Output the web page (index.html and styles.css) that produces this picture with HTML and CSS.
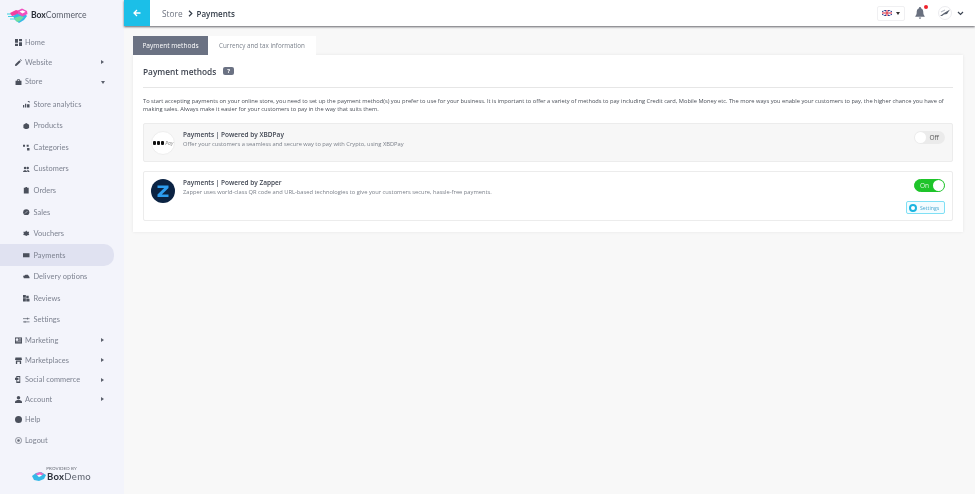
FILE: index.html
```html
<!DOCTYPE html>
<html lang="en">
<head>
<meta charset="utf-8">
<title>Payments</title>
<link rel="stylesheet" href="styles.css">
</head>
<body>
<div class="app">
  <aside class="sidebar">
    <div class="brand">
      <svg class="brand-logo" viewBox="0 0 22 15" width="22" height="15"><path d="M0 6h6M1 8.500h6M3 11h5" stroke="#3fd0e0" stroke-width="1"/><path d="M3 5l6-3 4 1-3 4-5 1z" fill="#f23fa0"/><path d="M6 8l6-3 6 1 2 2-3 4-5 3-4-3z" fill="#33b8e8"/><path d="M7 10l6-2 4 1-4 4-3 1z" fill="#6fe0a0"/><path d="M11 2.500l4-2 5 2.500.5 3-5 2.500-4.500-2.500z" fill="#f04fc0"/><path d="M12.500 3.500l3-1.300 3 1.500-3 1.800z" fill="#fff"/></svg>
      <span class="brand-name"><b>Box</b>Commerce</span>
    </div>
    <nav class="menu">
      <a class="item top"><svg class="ic" viewBox="0 0 8 8"><path d="M0 0h3.400v4.400H0zM4.600 0H8v2.600H4.600zM4.600 3.600H8V8H4.600zM0 5.400h3.400V8H0z"/></svg>Home</a>
      <a class="item top"><svg class="ic" viewBox="0 0 8 8"><path d="M0 8l.3-2L5 1.400 6.600 3 2 7.700zM5.600.8l.7-.6 1.500 1.500-.6.7z"/></svg>Website<i class="tri right"></i></a>
      <a class="item top"><svg class="ic" viewBox="0 0 8 8"><path d="M.6 3h6.800v5H.6zM2 3a2 2 0 0 1 4 0H5a1 1 0 0 0-2 0z"/></svg>Store<i class="tri down"></i></a>
      <div class="sub">
        <a class="item"><svg class="ic" viewBox="0 0 8 8"><path d="M0 5h1.500v3H0zM2.500 3.500H4V8H2.500zM5 4h3v4H5zM5.500 0H8v2.500z"/></svg>Store analytics</a>
        <a class="item"><svg class="ic" viewBox="0 0 8 8"><path d="M4 0l3.500 2v4L4 8 .5 6V2z"/></svg>Products</a>
        <a class="item"><svg class="ic" viewBox="0 0 8 8"><path d="M0 1h2.500v2.500H0zM4.500 1H7v2.500H4.500zM5 5h3v3H5z"/></svg>Categories</a>
        <a class="item"><svg class="ic" viewBox="0 0 8 8"><circle cx="2.500" cy="2.500" r="1.500"/><circle cx="5.800" cy="2.500" r="1.500"/><path d="M0 7.500C0 4.500 5 4.500 5 7.500zM5.500 7.500C5.500 6 5.300 5.200 5 5c2-.5 3 1 3 2.500z"/></svg>Customers</a>
        <a class="item"><svg class="ic" viewBox="0 0 8 8"><path d="M1 1h6v7H1zM3 0h2v1.500H3z"/></svg>Orders</a>
        <a class="item"><svg class="ic" viewBox="0 0 8 8"><circle cx="4" cy="4" r="3.800"/><path d="M2.500 5.500l3-3" stroke="#f3f4fb" stroke-width=".7"/></svg>Sales</a>
        <a class="item"><svg class="ic" viewBox="0 0 8 8"><path d="M4 .5l1.200 1.500 2.300.2-.5 2.300.8 1.500-2.300.5L4 7.500 2.500 6.500.2 6l.8-1.500L.5 2.200 2.800 2z"/></svg>Vouchers</a>
        <a class="item active"><svg class="ic" viewBox="0 0 8 8"><path d="M0 1.500h8v5H0z"/></svg>Payments</a>
        <a class="item"><svg class="ic" viewBox="0 0 8 8"><path d="M0 3.500h1.500L3 2h3l2 3v1.500H1z"/></svg>Delivery options</a>
        <a class="item"><svg class="ic" viewBox="0 0 8 8"><path d="M0 0h3.500v3.500H0zM4 1h3v3H4zM0 4h3.500v4H0zM4 4.500h4V8H4z"/></svg>Reviews</a>
        <a class="item"><svg class="ic line" viewBox="0 0 8 8"><path d="M0 2h8M0 6h8"/><path d="M5.500 .8v2.400M2.500 4.800v2.400"/></svg>Settings</a>
      </div>
      <a class="item top"><svg class="ic" viewBox="0 0 8 8"><path d="M0 .5h8v7H0z"/><path d="M1.200 2h2.300v2H1.200zM4.500 2H7M4.500 3.500H7M1.200 5.500H7" stroke="#f3f4fb" stroke-width=".6" fill="#f3f4fb"/></svg>Marketing<i class="tri right"></i></a>
      <a class="item top"><svg class="ic" viewBox="0 0 8 8"><path d="M.5 .5h7L8 3.500H0zM1 4h6v4H5.500V5.500h-3V8H1z"/></svg>Marketplaces<i class="tri right"></i></a>
      <a class="item top"><svg class="ic" viewBox="0 0 8 8"><path d="M1.500 0H6v8H1.500zM2.500 1.200v5h2.500v-5z" fill-rule="evenodd"/><path d="M0 2h4v2.500H0z"/></svg>Social commerce<i class="tri right"></i></a>
      <a class="item top"><svg class="ic" viewBox="0 0 8 8"><circle cx="4" cy="2" r="2"/><path d="M0 8V6.500C0 5 2.500 4.500 4 4.500S8 5 8 6.500V8z"/></svg>Account<i class="tri right"></i></a>
      <a class="item top"><svg class="ic" viewBox="0 0 8 8"><circle cx="4" cy="4" r="4"/></svg>Help</a>
      <a class="item top logout"><svg class="ic ring" viewBox="0 0 8 8"><circle cx="4" cy="4" r="3.500"/><circle cx="4" cy="4" r="1.200" class="dot"/></svg>Logout</a>
    </nav>
    <div class="provided">
      <span class="provided-by">PROVIDED BY</span>
      <div class="provided-brand">
        <svg viewBox="0 0 14 9" width="14" height="9"><path d="M0 4l4-3 5-1 5 3-2 4-5 2-5-1z" fill="#35b8e8"/><path d="M3 2l5-2 4 2-4 2z" fill="#f06ac0"/><path d="M5 3.500l3-1 2 1-3 1.500z" fill="#fff"/></svg>
        <span><b>Box</b>Demo</span>
      </div>
    </div>
  </aside>

  <div class="main">
    <header class="topbar">
      <button class="back" type="button" aria-label="Back"><svg viewBox="0 0 8 8" width="8" height="8"><path d="M7.500 4H1M4 1L1 4l3 3" fill="none" stroke="#fff" stroke-width="1.300"/></svg></button>
      <div class="crumbs"><span class="crumb-parent">Store</span><svg class="chev" viewBox="0 0 5 7" width="5" height="7"><path d="M1 .8L3.800 3.500 1 6.200" fill="none" stroke="#333c48" stroke-width="1.200"/></svg><span class="crumb-current">Payments</span></div>
      <div class="top-actions">
        <div class="lang">
          <svg viewBox="0 0 10 6" width="10" height="6"><rect width="10" height="6" fill="#2a3d8f"/><path d="M0 0l10 6M10 0L0 6" stroke="#fff" stroke-width="1.200"/><path d="M5 0v6M0 3h10" stroke="#fff" stroke-width="2"/><path d="M5 0v6M0 3h10" stroke="#d8283c" stroke-width="1.100"/></svg>
          <i class="tri down dark"></i>
        </div>
        <div class="bell">
          <svg viewBox="0 0 10 12" width="10" height="12"><path d="M5 0a1 1 0 0 1 1 1.200C8 2 8.300 3.500 8.300 5.500c0 2 .7 3 1.400 3.700v.6H.3v-.6C1 8.500 1.700 7.500 1.700 5.500c0-2 .3-3.500 2.300-4.300A1 1 0 0 1 5 0zM3.800 10.500h2.400A1.200 1.200 0 0 1 3.800 10.500z" fill="#69707f"/></svg>
          <span class="bell-dot"></span>
        </div>
        <div class="avatar-wrap">
          <span class="avatar"><svg viewBox="0 0 12 12" width="12" height="12"><path d="M1 9l4-3 6-3.500-3 4.500-3 .5-2 1.500z" fill="#59616f"/><path d="M2 5l4-2" stroke="#b5bac4" stroke-width="1.200"/></svg></span>
          <svg class="avatar-chev" viewBox="0 0 7 5" width="7" height="5"><path d="M1 1l2.500 2.500L6 1" fill="none" stroke="#3c4452" stroke-width="1.200"/></svg>
        </div>
      </div>
    </header>

    <div class="content">
      <div class="tabs">
        <span class="tab current">Payment methods</span>
        <span class="tab">Currency and tax information</span>
      </div>
      <section class="card">
        <div class="card-head">
          <h1>Payment methods</h1>
          <span class="help-badge">?</span>
        </div>
        <p class="intro">To start accepting payments on your online store, you need to set up the payment method(s) you prefer to use for your business. It is important to offer a variety of methods to pay including Credit card, Mobile Money etc. The more ways you enable your customers to pay, the higher chance you have of making sales. Always make it easier for your customers to pay in the way that suits them.</p>

        <div class="method off">
          <span class="logo xbd"><i></i><i></i><i></i><em>Pay</em></span>
          <div class="method-text">
            <h2>Payments | Powered by XBDPay</h2>
            <p>Offer your customers a seamless and secure way to pay with Crypto, using XBDPay</p>
          </div>
          <div class="method-side">
            <span class="toggle is-off"><span class="knob"></span><span class="toggle-label">Off</span></span>
          </div>
        </div>

        <div class="method on">
          <span class="logo zap"><svg viewBox="0 0 24 24" width="24" height="24"><circle cx="12" cy="12" r="12" fill="#0b2343"/><path d="M6.500 6.500h11v2.600l-6.700 6.300h6.700v2.600h-11v-2.600l6.700-6.300H6.500z" fill="#2d9df0"/></svg></span>
          <div class="method-text">
            <h2>Payments | Powered by Zapper</h2>
            <p>Zapper uses world-class QR code and URL-based technologies to give your customers secure, hassle-free payments.</p>
          </div>
          <div class="method-side">
            <span class="toggle is-on"><span class="toggle-label">On</span><span class="knob"></span></span>
            <span class="settings-btn"><span class="settings-ic"></span>Settings</span>
          </div>
        </div>
      </section>
    </div>
  </div>
</div>
</body>
</html>
```

FILE: styles.css
```css
* { box-sizing: border-box; }
html, body { margin: 0; height: 100%; }
body { font-family: "Open Sans", "Liberation Sans", sans-serif; background: #f8f8f8; overflow: hidden; }
.app { display: flex; width: 975px; height: 494px; filter: blur(.35px); }

/* Sidebar */
.sidebar { width: 124px; flex: none; background: #f3f4fb; display: flex; flex-direction: column; position: relative; }
.brand { display: flex; align-items: center; gap: 2px; height: 32.500px; padding: 0 0 2px 7px; }
.brand-name { font-family: Lato, sans-serif; font-size: 8.600px; color: #5a5f6b; }
.brand-name b { color: #2a2e38; }
.menu { display: flex; flex-direction: column; }
.sub { display: flex; flex-direction: column; padding-top: 2px; }
.item { display: flex; align-items: center; height: 19.700px; font-family: Lato, sans-serif; font-size: 7.400px; color: #7d8290; position: relative; padding-left: 15px; letter-spacing: .05px; }
.item .ic { width: 7px; height: 7px; fill: #4b505c; margin-right: 3px; flex: none; }
.item .ic.line { fill: none; stroke: #5b606c; stroke-width: .9; }
.item .ic.ring { fill: none; stroke: #6a6f7b; stroke-width: .8; }
.item .ic.ring .dot { fill: #6a6f7b; }
.sub .item { height: 21.550px; padding-left: 23px; }
.sub .item .ic { margin-right: 4px; width: 6.500px; height: 6.500px; }
.item.active { background: #e0e2f1; width: 114px; border-radius: 0 10px 10px 0; }
.logout { margin-top: 2px; }
.tri { position: absolute; left: 101px; top: 50%; width: 0; height: 0; border-style: solid; }
.tri.right { margin-top: -2px; border-width: 2px 0 2px 3px; border-color: transparent transparent transparent #5b606c; }
.tri.down { margin-top: -1px; border-width: 3px 2px 0 2px; border-color: #5b606c transparent transparent transparent; }
.provided { margin-top: 15.500px; display: flex; flex-direction: column; align-items: center; padding-right: 1px; }
.provided-by { font-family: Lato, sans-serif; font-size: 4.500px; color: #6a6e78; letter-spacing: .1px; }
.provided-brand { display: flex; align-items: center; gap: 1px; }
.provided-brand span { font-family: Lato, sans-serif; font-size: 9.500px; color: #5a5f6b; letter-spacing: .3px; }
.provided-brand b { color: #2a2e38; }

/* Main */
.main { flex: 1; min-width: 0; display: flex; flex-direction: column; }
.topbar { height: 26px; flex: none; background: #fff; display: flex; align-items: center; box-shadow: 0 1px 2px rgba(40,40,50,.7); position: relative; z-index: 1; }
.back { width: 26px; height: 26px; flex: none; border: 0; padding: 0; background: #1bbfe8; display: flex; align-items: center; justify-content: center; }
.crumbs { display: flex; align-items: center; margin-left: 12px; font-size: 8.300px; color: #6e7480; }
.chev { margin: 0 4px 0 5px; }
.crumb-current { color: #333c48; font-weight: 600; font-size: 8px; }
.top-actions { margin-left: auto; display: flex; align-items: center; padding-right: 11px; }
.lang { width: 28px; height: 15px; border: 1px solid #f0f0f2; border-radius: 2px; display: flex; align-items: center; justify-content: center; gap: 4px; position: relative; }
.tri.dark { position: static; margin: 0; border-color: #333 transparent transparent transparent; }
.bell { margin-left: 10px; position: relative; display: flex; }
.bell-dot { position: absolute; right: -3px; top: -2px; width: 4px; height: 4px; border-radius: 50%; background: #f0222c; }
.avatar-wrap { margin-left: 13px; display: flex; align-items: center; gap: 5px; }
.avatar { width: 14px; height: 14px; border-radius: 50%; border: 1px solid #ececef; display: flex; align-items: center; justify-content: center; overflow: hidden; }
.content { padding: 10px 12px 0 9px; }
.tabs { display: flex; height: 19px; }
.tab { display: flex; align-items: center; justify-content: center; font-size: 6.250px; color: #7d838d; background: #fff; width: 108px; }
.tab.current { width: 75px; background: #6b7283; color: #fff; font-size: 6.600px; }
.card { background: #fff; height: 177px; padding: 0 10px; box-shadow: 0 0 3px rgba(0,0,0,.08); }
.card-head { display: flex; align-items: center; gap: 7px; height: 33px; border-bottom: 1px solid #e6e6e6; }
.card-head h1 { margin: 0; font-size: 8.300px; font-weight: 600; color: #3e4450; }
.help-badge { width: 11px; height: 8px; border-radius: 2px; background: #6b7283; color: #fff; font-size: 6px; font-weight: 700; display: flex; align-items: center; justify-content: center; }
.intro { margin: 10px 0 0; font-size: 5.710px; line-height: 7.500px; color: #4a4f58; height: 16px; }
.method { display: flex; border: 1px solid #ececec; border-radius: 2px; padding: 7px 7px 0 7px; margin-top: 9px; }
.method.off { background: #f7f7f7; height: 39px; }
.method.on { background: #fff; height: 50px; }
.logo { width: 24px; height: 24px; flex: none; border-radius: 50%; display: flex; align-items: center; justify-content: center; }
.logo.xbd { background: #fff; border: 1px solid #eee; gap: .5px; }
.logo.xbd i { width: 3.500px; height: 3.500px; background: #111; border-radius: 1px; }
.logo.xbd em { font-size: 5px; color: #888; margin-left: .5px; font-style: italic; }
.method-text { margin-left: 8px; flex: 1; min-width: 0; }
.method-text h2 { margin: 0; font-size: 6.500px; line-height: 8.500px; font-weight: 600; color: #3e4450; }
.method-text p { margin: 0; font-size: 5.740px; line-height: 9px; color: #7b808a; }
.method-side { display: flex; flex-direction: column; align-items: flex-end; gap: 9px; }
.toggle { width: 31px; height: 13px; border-radius: 7px; display: flex; align-items: center; justify-content: space-between; padding: 0 1px; font-size: 6.500px; }
.toggle.is-off { background: #ebebeb; color: #555; }
.toggle.is-off .toggle-label { margin-right: 5px; }
.toggle.is-on { background: #1ec42a; color: #dff7e0; border: 1px solid #1ec42a; padding: 0; }
.toggle.is-on .toggle-label { margin-left: 5px; }
.knob { width: 11px; height: 11px; border-radius: 50%; background: #fff; }
.settings-btn { width: 39px; height: 13px; border: 1px solid #7fe0f5; border-radius: 2px; background: #f3fcff; display: flex; align-items: center; gap: 3px; padding-left: 2px; font-size: 5.200px; color: #4aa8d0; }
.settings-ic { width: 8px; height: 8px; border-radius: 50%; border: 2px solid #1bb4e0; background: #fff; flex: none; }
```
